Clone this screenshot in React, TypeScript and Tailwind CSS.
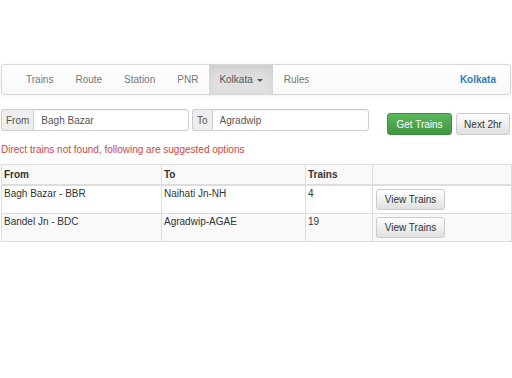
import { useState } from 'react';

const navItems = ['Trains', 'Route', 'Station', 'PNR'];

const rows = [
  { from: 'Bagh Bazar - BBR', to: 'Naihati Jn-NH', trains: '4' },
  { from: 'Bandel Jn - BDC', to: 'Agradwip-AGAE', trains: '19' },
];

function InputGroup({ label, value, width }: { label: string; value: string; width: string }) {
  return (
    <div className={`flex h-[22px] ${width}`}>
      <span className="flex items-center px-[4px] bg-[#eee] border border-[#ccc] border-r-0 rounded-l-[3px] text-[#555]">
        {label}
      </span>
      <input
        defaultValue={value}
        className="flex-1 min-w-0 px-[7px] border border-[#ccc] rounded-r-[3px] bg-white text-[#555] outline-none shadow-[inset_0_1px_1px_rgba(0,0,0,0.075)]"
      />
    </div>
  );
}

export default function App() {
  const [from] = useState('Bagh Bazar');
  const [to] = useState('Agradwip');

  return (
    <div className="pt-16 px-[1px] font-['Liberation_Sans',Arial,sans-serif] text-[10px] text-[#333] bg-white min-h-[378px]">
      {/* navbar */}
      <nav className="flex items-stretch h-[31px] pl-[13px] pr-[14px] border border-[#d8d8d8] rounded-[3px] bg-linear-to-b from-white to-[#f8f8f8] shadow-[0_1px_4px_rgba(0,0,0,0.075)]">
        <ul className="flex items-stretch">
          {navItems.map((item) => (
            <li key={item} className="flex items-center px-[11px] text-[#777]">
              {item}
            </li>
          ))}
          <li className="flex items-center px-[10px] text-[#555] bg-linear-to-b from-[#dbdbdb] to-[#e2e2e2] shadow-[inset_0_3px_9px_rgba(0,0,0,0.075)]">
            Kolkata
            <span className="ml-[4px] mt-[1px] w-0 h-0 border-x-[3px] border-x-transparent border-t-[3px] border-t-[#555]" />
          </li>
          <li className="flex items-center px-[11px] text-[#777]">Rules</li>
        </ul>
        <div className="ml-auto flex items-center font-bold text-[#337ab7]">Kolkata</div>
      </nav>

      {/* search form */}
      <div className="flex items-start mt-[14px]">
        <InputGroup label="From" value={from} width="w-[188px]" />
        <div className="w-[3px]" />
        <InputGroup label="To" value={to} width="w-[177px]" />
        <button className="ml-[18px] mt-[4px] h-[22px] w-[65px] rounded-[3px] border border-[#3e8f3e] text-white bg-linear-to-b from-[#5cb85c] to-[#419641]">
          Get Trains
        </button>
        <button className="ml-[4px] mt-[4px] h-[22px] w-[54px] rounded-[3px] border border-[#ccc] text-[#333] bg-linear-to-b from-white to-[#e0e0e0]">
          Next 2hr
        </button>
      </div>

      <p className="mt-[8px] leading-[14px] text-[#cc4542]">
        Direct trains not found, following are suggested options
      </p>

      {/* results */}
      <table className="mt-[7px] w-[510px] table-fixed border-collapse border border-[#ddd]">
        <colgroup>
          <col className="w-[160px]" />
          <col className="w-[144px]" />
          <col className="w-[67px]" />
          <col className="w-[139px]" />
        </colgroup>
        <tbody>
          <tr className="bg-[#f9f9f9] h-[20px]">
            <th className="text-left font-bold px-[2px] border border-[#ddd] border-b-2">From</th>
            <th className="text-left font-bold px-[2px] border border-[#ddd] border-b-2">To</th>
            <th className="text-left font-bold px-[2px] border border-[#ddd] border-b-2">Trains</th>
            <th className="border border-[#ddd] border-b-2" />
          </tr>
          {rows.map((r, i) => (
            <tr key={r.from} className={i % 2 === 1 ? 'bg-[#f9f9f9]' : 'bg-white'}>
              <td className="align-top px-[2px] pt-[2px] leading-[12px] border border-[#ddd]">{r.from}</td>
              <td className="align-top px-[2px] pt-[2px] leading-[12px] border border-[#ddd]">{r.to}</td>
              <td className="align-top px-[2px] pt-[2px] leading-[12px] border border-[#ddd]">{r.trains}</td>
              <td className="align-top px-[3px] pt-[3px] pb-[3px] border border-[#ddd]">
                <button className="h-[21px] w-[69px] rounded-[3px] border border-[#ccc] text-[#333] bg-linear-to-b from-white to-[#e0e0e0]">
                  View Trains
                </button>
              </td>
            </tr>
          ))}
        </tbody>
      </table>
    </div>
  );
}
